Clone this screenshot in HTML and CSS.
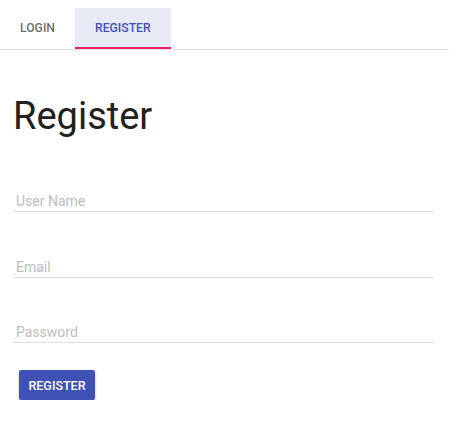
FILE: index.html
```html
<!DOCTYPE html>
<html>
<head>
<meta charset="utf-8">
<link rel="stylesheet" href="styles.css">
</head>
<body>
<div class="app">
  <nav class="tabs">
    <div class="tab">LOGIN</div>
    <div class="tab active">REGISTER</div>
  </nav>
  <main class="content">
    <h1 class="title">Register</h1>
    <form class="form">
      <div class="field"><input type="text" placeholder="User Name"></div>
      <div class="field"><input type="text" placeholder="Email"></div>
      <div class="field"><input type="password" placeholder="Password"></div>
      <div class="actions"><button type="button" class="btn">REGISTER</button></div>
    </form>
  </main>
</div>
</body>
</html>
```
FILE: styles.css
```css
* { box-sizing: border-box; }
html, body { margin: 0; padding: 0; background: #fff; }
body { font-family: Roboto, "Noto Sans", sans-serif; }
.app { width: 449px; }
.tabs {
  display: flex;
  padding-top: 8px;
  border-bottom: 1px solid #e0e0e0;
}
.tab {
  height: 41px;
  padding: 0 20px;
  display: flex;
  align-items: center;
  font-size: 12.2px;
  font-weight: 500;
  color: rgba(0,0,0,0.6);
  border-bottom: 2px solid transparent;
}
.tab.active {
  background: #e8eaf6;
  color: #3f51b5;
  border-bottom-color: #e91e63;
}
.content { padding: 0 15px 0 13px; }
.title {
  margin: 42px 0 0;
  font-size: 38px;
  font-weight: 400;
  line-height: 48px;
  color: #212121;
}
.form { margin-top: 50px; }
.field + .field { margin-top: 43.5px; }
.field input {
  display: block;
  width: 100%;
  border: none;
  border-bottom: 1px solid #e0e0e0;
  font-family: inherit;
  font-size: 14px;
  line-height: 16px;
  padding: 1px 0 0 3px;
  height: 22px;
  outline: none;
  color: #212121;
  background: transparent;
}
.field input::placeholder { color: #bdbdbd; }
.actions { padding-left: 6px; margin-top: 27px; }
.btn {
  width: 76px;
  height: 30px;
  border: none;
  border-radius: 2px;
  background: #3f51b5;
  color: #fff;
  font-family: inherit;
  font-size: 12.5px;
  font-weight: 500;
  padding: 0;
  box-shadow: 0 2px 3px rgba(0,0,0,0.25);
}
```
